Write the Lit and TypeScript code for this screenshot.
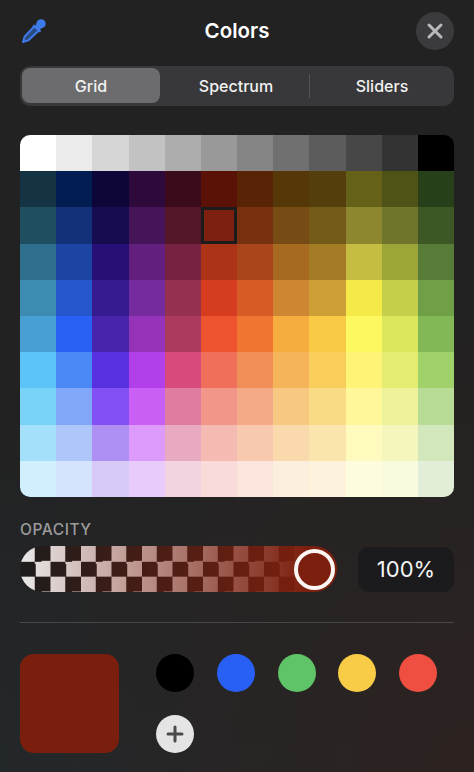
import { LitElement, html, css } from "lit";
import { customElement } from "lit/decorators.js";

const PALETTE = [
  "ffffff ebebeb d6d6d6 c2c2c2 adadad 999999 858585 707070 5c5c5c 474747 333333 000000",
  "143444 011d52 0e0539 2d0a3b 3b0b1b 5a1106 592305 563708 543e0b 666118 4f5316 27401a",
  "1f4e60 123178 170c50 461458 541629 7e2010 78310f 764c14 745a18 8d8730 6f752a 3e5825",
  "2f6f8e 1c44a2 270f75 621f7e 772240 ac3218 a8451a a66a20 a47c25 c5bc42 9ba538 567c38",
  "3e8bb2 2557cc 361b90 752a9e 96304f d63d20 d65b24 cd8732 cd9f37 f5e94a c5d04a 6f9f46",
  "479fd4 2961f5 4824ad 9433b8 ab3a5d ee5330 f07531 f4ad3e f7c945 fdf85f dce85c 82b855",
  "5cc4f8 4a88f5 5730e0 b140ea d84a7c f06f5b f08f58 f5b459 f9cd5c fff478 e4ed70 a0d16b",
  "79d3f8 81a8f8 8350f6 ca5ff5 e07ca0 f3968a f4aa87 f7c882 f9db85 fff79a ecf19a b8dc96",
  "a5e0fa aec6fa ae90f5 dc9bfa e9a9c3 f5bab2 f7caaf fadaac fbe5af fffabd f4f6bc d2e8bc",
  "d2effe d6e3fd d7caf9 e9cbfb f2d4e1 f9dcd9 fbe5dc fbeedd fdf3dc fefcdf f8fbde e2eed7",
].map((r) => r.split(" "));

const FAVS = ["#000000", "#2860f5", "#5fc367", "#f9cc47", "#ee4f40"];

@customElement("app-root")
export class AppRoot extends LitElement {
  static styles = css`
    :host {
      display: block;
      width: 474px;
      height: 772px;
      box-sizing: border-box;
      padding: 12px 20px 0;
      overflow: hidden;
      font-family: Inter, "Liberation Sans", sans-serif;
      color: #fff;
      background:
        radial-gradient(circle at 100% 100%, #2c2220 0%, rgba(44, 34, 32, 0) 55%),
        linear-gradient(180deg, #222222 0%, #222222 55%, #23282b 100%);
    }
    .header {
      display: grid;
      grid-template-columns: 38px 1fr 38px;
      align-items: center;
      height: 38px;
    }
    .dropper { width: 26px; height: 26px; display: block; margin-left: 1px; }
    .title {
      text-align: center;
      font-size: 20.5px;
      font-weight: 600;
      line-height: 38px;
    }
    .close {
      width: 38px;
      height: 38px;
      border-radius: 50%;
      background: #3b3b3d;
      display: flex;
      align-items: center;
      justify-content: center;
      justify-self: end;
    }
    .close svg { width: 18px; height: 18px; display: block; }
    .seg {
      margin-top: 16px;
      height: 40px;
      box-sizing: border-box;
      padding: 2px 0 3px 2px;
      border-radius: 10px;
      background: #38383a;
      display: grid;
      grid-template-columns: 138px 149px 1px 144px;
      align-items: stretch;
      font-size: 16px;
      font-weight: 500;
    }
    .tab {
      display: flex;
      align-items: center;
      justify-content: center;
      color: #f2f2f2;
    }
    .tab.on {
      background: #6c6c6e;
      border-radius: 8px;
    }
    .tab.spectrum { padding-left: 3px; }
    .sep {
      background: #545456;
      margin: 6px 0 5px;
    }
    .grid {
      margin-top: 29px;
      height: 362px;
      border-radius: 10px;
      overflow: hidden;
      display: grid;
      grid-template-columns: repeat(12, 1fr);
      grid-template-rows: repeat(10, 1fr);
    }
    .cell { min-width: 0; min-height: 0; }
    .cell.sel {
      box-sizing: border-box;
      border: 3px solid #1c1c1c;
    }
    .label {
      margin-top: 23px;
      font-size: 15.5px;
      line-height: 19px;
      font-weight: 500;
      letter-spacing: 0.55px;
      color: #9b9b9b;
    }
    .row {
      margin-top: 7px;
      display: flex;
      align-items: center;
      justify-content: space-between;
    }
    .slider {
      position: relative;
      width: 317px;
      height: 46px;
      border-radius: 23px;
      background:
        linear-gradient(90deg, rgba(124, 31, 14, 0) 0%, rgba(124, 31, 14, 1) 90%),
        conic-gradient(#1c1c1c 0 25%, #e9e9e9 0 50%, #1c1c1c 0 75%, #e9e9e9 0) 0 0 / 30.5px 30.67px;
    }
    .thumb {
      position: absolute;
      left: 274px;
      top: 2.5px;
      width: 41px;
      height: 41px;
      box-sizing: border-box;
      border-radius: 50%;
      border: 4px solid #fbf6f3;
      background: #7c1f0e;
    }
    .value {
      width: 96px;
      height: 45px;
      border-radius: 11px;
      background: #1b1b1d;
      display: flex;
      align-items: center;
      justify-content: center;
      font-size: 22px;
      color: #f4f4f4;
    }
    .rule {
      margin-top: 30px;
      height: 1px;
      background: #47484a;
    }
    .bottom {
      margin-top: 31px;
      display: flex;
      gap: 37px;
    }
    .current {
      width: 99px;
      height: 99px;
      border-radius: 14px;
      background: #7a1f0e;
    }
    .favs {
      display: grid;
      grid-template-columns: repeat(5, 38px);
      column-gap: 22.75px;
      row-gap: 23px;
      align-content: start;
    }
    .dot {
      width: 38px;
      height: 38px;
      border-radius: 50%;
    }
    .add {
      background: #e4e4e4;
      display: flex;
      align-items: center;
      justify-content: center;
    }
    .add svg { width: 18px; height: 18px; display: block; }
  `;

  render() {
    return html`
      <div class="header">
        <svg class="dropper" viewBox="0 0 26 26" fill="none">
          <path d="M13.2 8.4 L3.6 18.8 L2 24 L7.2 22.4 L17.6 12.8" fill="#2a4a80" stroke="#3f7be8" stroke-width="2" stroke-linejoin="round"/>
          <path d="M11.4 8 L13 6.4 L14.6 7.6 L15.4 6.2 C15.2 2.8 18 1 20.6 1.2 C23.6 1.6 25.2 4.2 24.6 6.8 C24.2 8.6 22.6 10 20.2 10.4 L19 11.4 L20.2 13 L18.6 14.6 Z" fill="#3f7be8"/>
        </svg>
        <div class="title">Colors</div>
        <div class="close">
          <svg viewBox="0 0 18 18" fill="none" stroke="#b9b9bb" stroke-width="3" stroke-linecap="round">
            <path d="M3 3 L15 15 M15 3 L3 15"/>
          </svg>
        </div>
      </div>
      <div class="seg">
        <div class="tab on">Grid</div>
        <div class="tab spectrum">Spectrum</div>
        <div class="sep"></div>
        <div class="tab">Sliders</div>
      </div>
      <div class="grid">
        ${PALETTE.map((row, r) =>
          row.map(
            (c, i) =>
              html`<div
                class="cell ${r === 2 && i === 5 ? "sel" : ""}"
                style="background:#${c}"
              ></div>`
          )
        )}
      </div>
      <div class="label">OPACITY</div>
      <div class="row">
        <div class="slider"><div class="thumb"></div></div>
        <div class="value">100%</div>
      </div>
      <div class="rule"></div>
      <div class="bottom">
        <div class="current"></div>
        <div class="favs">
          ${FAVS.map((c) => html`<div class="dot" style="background:${c}"></div>`)}
          <div class="dot add">
            <svg viewBox="0 0 18 18" fill="none" stroke="#4b4b4b" stroke-width="3" stroke-linecap="round">
              <path d="M9 2 V16 M2 9 H16"/>
            </svg>
          </div>
        </div>
      </div>
    `;
  }
}
